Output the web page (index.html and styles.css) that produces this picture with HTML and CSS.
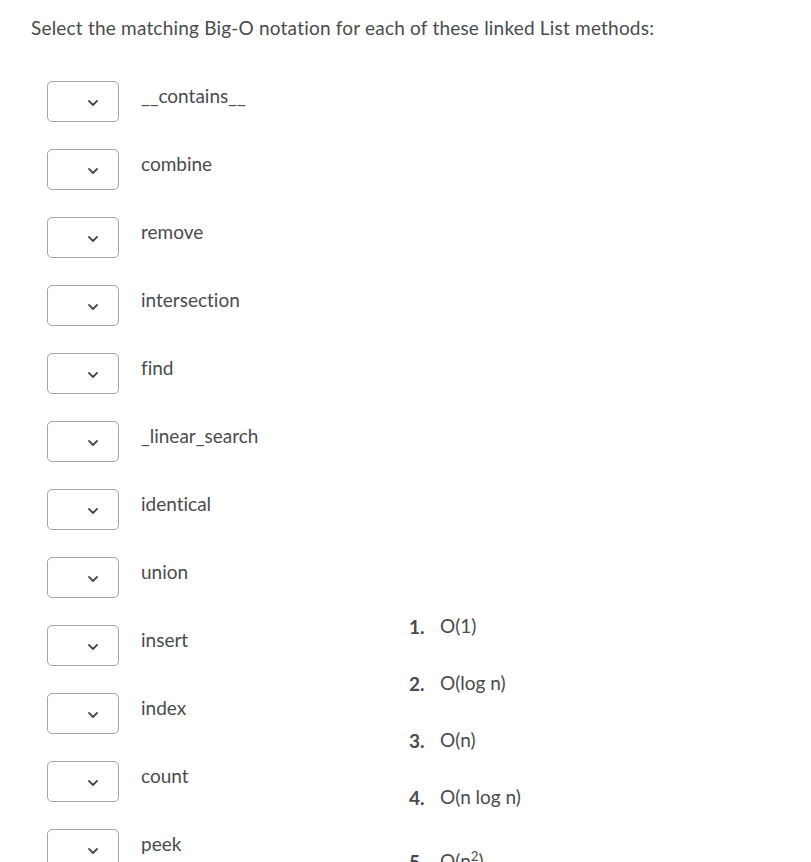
FILE: index.html
```html
<!DOCTYPE html>
<html lang="en">
<head>
<meta charset="utf-8">
<title>Big-O matching</title>
<link rel="stylesheet" href="styles.css">
</head>
<body>
<div class="page">
  <p class="prompt">Select the matching Big-O notation for each of these linked List methods:</p>
  <div class="content">
    <div class="matches">
      <div class="row"><div class="select"><svg class="chev" width="10" height="6" viewBox="0 0 10 6"><polyline points="1,1 5,5 9,1"/></svg></div><span class="label">__contains__</span></div>
      <div class="row"><div class="select"><svg class="chev" width="10" height="6" viewBox="0 0 10 6"><polyline points="1,1 5,5 9,1"/></svg></div><span class="label">combine</span></div>
      <div class="row"><div class="select"><svg class="chev" width="10" height="6" viewBox="0 0 10 6"><polyline points="1,1 5,5 9,1"/></svg></div><span class="label">remove</span></div>
      <div class="row"><div class="select"><svg class="chev" width="10" height="6" viewBox="0 0 10 6"><polyline points="1,1 5,5 9,1"/></svg></div><span class="label">intersection</span></div>
      <div class="row"><div class="select"><svg class="chev" width="10" height="6" viewBox="0 0 10 6"><polyline points="1,1 5,5 9,1"/></svg></div><span class="label">find</span></div>
      <div class="row"><div class="select"><svg class="chev" width="10" height="6" viewBox="0 0 10 6"><polyline points="1,1 5,5 9,1"/></svg></div><span class="label">_linear_search</span></div>
      <div class="row"><div class="select"><svg class="chev" width="10" height="6" viewBox="0 0 10 6"><polyline points="1,1 5,5 9,1"/></svg></div><span class="label">identical</span></div>
      <div class="row"><div class="select"><svg class="chev" width="10" height="6" viewBox="0 0 10 6"><polyline points="1,1 5,5 9,1"/></svg></div><span class="label">union</span></div>
      <div class="row"><div class="select"><svg class="chev" width="10" height="6" viewBox="0 0 10 6"><polyline points="1,1 5,5 9,1"/></svg></div><span class="label">insert</span></div>
      <div class="row"><div class="select"><svg class="chev" width="10" height="6" viewBox="0 0 10 6"><polyline points="1,1 5,5 9,1"/></svg></div><span class="label">index</span></div>
      <div class="row"><div class="select"><svg class="chev" width="10" height="6" viewBox="0 0 10 6"><polyline points="1,1 5,5 9,1"/></svg></div><span class="label">count</span></div>
      <div class="row"><div class="select"><svg class="chev" width="10" height="6" viewBox="0 0 10 6"><polyline points="1,1 5,5 9,1"/></svg></div><span class="label">peek</span></div>
    </div>
    <ol class="choices">
      <li><span class="num">1.</span><span class="opt">O(1)</span></li>
      <li><span class="num">2.</span><span class="opt">O(log n)</span></li>
      <li><span class="num">3.</span><span class="opt">O(n)</span></li>
      <li><span class="num">4.</span><span class="opt">O(n log n)</span></li>
      <li class="tall"><span class="num">5.</span><span class="opt">O(n<sup>2</sup>)</span></li>
    </ol>
  </div>
</div>
</body>
</html>
```

FILE: styles.css
```css
html, body {
  margin: 0;
  padding: 0;
  background: #ffffff;
}

body {
  font-family: Lato, "Open Sans", sans-serif;
  color: #494c4e;
  font-variant-ligatures: none;
  overflow: hidden;
}

.page {
  padding: 16px 0 0 31px;
}

.prompt {
  margin: 0;
  font-size: 19px;
  line-height: 24px;
  letter-spacing: 0.2px;
}

.content {
  display: grid;
  grid-template-columns: 378px 1fr;
  margin-top: 41px;
}

.matches {
  display: flex;
  flex-direction: column;
  gap: 27px;
  padding-left: 16px;
}

.row {
  display: flex;
  align-items: flex-start;
  gap: 22px;
}

.select {
  box-sizing: border-box;
  width: 72px;
  height: 41px;
  border: 1px solid #a4a7aa;
  border-radius: 5px;
  background: #fff;
  display: flex;
  align-items: center;
  justify-content: flex-end;
  padding-right: 20px;
  padding-top: 2px;
}

.chev {
  display: block;
}

.chev polyline {
  fill: none;
  stroke: #494c4e;
  stroke-width: 1.8;
  stroke-linecap: round;
  stroke-linejoin: round;
}

.label {
  font-size: 19px;
  line-height: 24px;
  padding-top: 3px;
}

.choices {
  list-style: none;
  margin: 0;
  padding: 533px 0 0 0;
  display: flex;
  flex-direction: column;
  gap: 33px;
}

.choices li {
  display: flex;
  align-items: flex-start;
  height: 24px;
  font-size: 19px;
  line-height: 24px;
}

.choices li.tall {
  padding-top: 7px;
}

.num {
  width: 31px;
  font-weight: 700;
  line-height: 22px;
  padding-top: 2px;
}

.opt sup {
  font-size: 0.7em;
  line-height: 0;
}
```
